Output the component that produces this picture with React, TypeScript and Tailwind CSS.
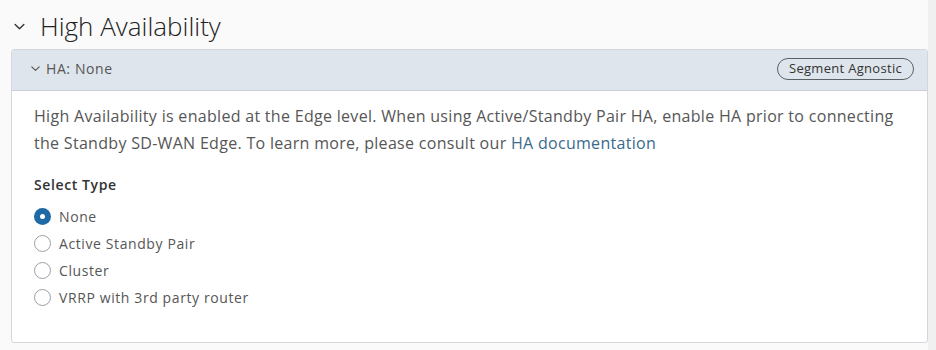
import React from "react";

const Chevron = ({ size, color }: { size: number; color: string }) => (
  <svg width={size} height={size} viewBox="0 0 12 12" fill="none">
    <path d="M2 4.2 L6 8 L10 4.2" stroke={color} strokeWidth="1.3" strokeLinecap="round" strokeLinejoin="round" />
  </svg>
);

const options = ["None", "Active Standby Pair", "Cluster", "VRRP with 3rd party router"];

export default function App() {
  return (
    <div className="w-[936px] h-[350px] bg-[#fafafa] overflow-hidden flex" style={{ fontFamily: "'Open Sans', 'Noto Sans', sans-serif" }}>
      <div className="w-[928px] flex flex-col">
        <div className="flex items-center h-[49px] pl-[13px] gap-[14px] pt-[3px]">
          <Chevron size={13} color="#333" />
          <span className="text-[26px] font-light text-[#222] leading-none">High Availability</span>
        </div>
        <div className="ml-[11px] w-[917px] h-[294px] border border-[#d3d7db] rounded-[3px] bg-white flex flex-col overflow-hidden">
          <div className="h-[41px] bg-[#dfe5ec] border-b border-[#c9cfd5] flex items-center pl-[18px] pr-[13px] pb-[3px]">
            <Chevron size={11} color="#555" />
            <span className="ml-[5px] text-[14px] text-[#565656] tracking-[0.6px]">HA: None</span>
            <span className="ml-auto h-[22px] px-[11px] rounded-full border border-[#5a6167] text-[13px] text-[#333] tracking-[0.3px] flex items-center leading-none">Segment Agnostic</span>
          </div>
          <div className="pl-[22px] pr-[20px] pt-[12px]">
            <p className="text-[16px] leading-[27px] text-[#565656] tracking-[0.3px]">
              High Availability is enabled at the Edge level. When using Active/Standby Pair HA, enable HA prior to connecting the Standby SD-WAN Edge. To learn more, please consult our <span className="text-[#3a6a8c]">HA documentation</span>
            </p>
            <div className="mt-[19px] text-[14px] font-semibold text-[#333] leading-[18px] tracking-[0.6px]">Select Type</div>
            <div className="mt-[9px] flex flex-col">
              {options.map((o, i) => (
                <div key={o} className="h-[27px] flex items-center gap-[8px]">
                  {i === 0 ? (
                    <span className="w-[17px] h-[17px] rounded-full bg-[#1f6aa5] flex items-center justify-center">
                      <span className="w-[5px] h-[5px] rounded-full bg-white" />
                    </span>
                  ) : (
                    <span className="w-[17px] h-[17px] rounded-full border border-[#9aa0a6] bg-white" />
                  )}
                  <span className="text-[14px] text-[#565656] tracking-[0.6px]">{o}</span>
                </div>
              ))}
            </div>
          </div>
        </div>
      </div>
      <div className="flex-1 bg-[#f0f0f0]" />
    </div>
  );
}
